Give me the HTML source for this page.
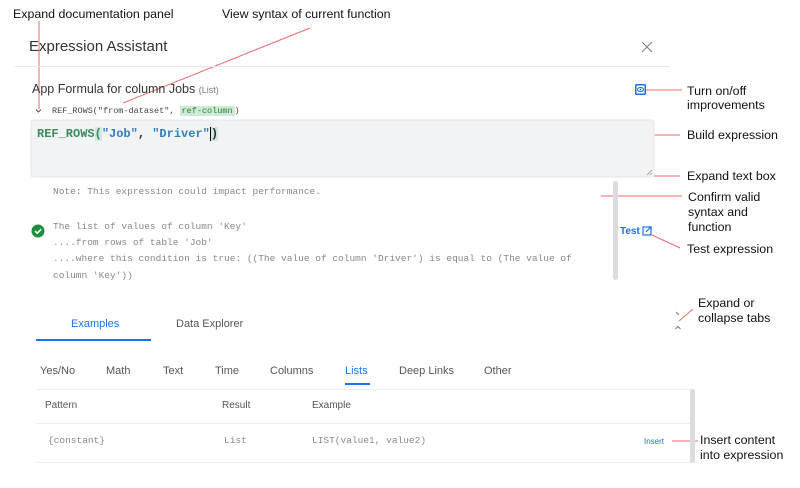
<!DOCTYPE html>
<html><head><meta charset="utf-8"><style>
body{margin:0;width:800px;height:488px;background:#fff;position:relative;overflow:hidden;font-family:"Liberation Sans",sans-serif;}
.a{position:absolute;white-space:nowrap;}
.lbl{font-size:12.4px;color:#111;line-height:14px;}
.mono{font-family:"Liberation Mono",monospace;}
.g{color:#888;font-size:9.5px;}
.tab{font-size:11px;color:#555;}
</style></head><body>
<svg class="a" style="left:0;top:0" width="800" height="488">
<g stroke="#f06a6a" stroke-width="1" fill="none">
<line x1="39" y1="21" x2="39" y2="109"/>
<line x1="310" y1="28" x2="123" y2="103"/>
<line x1="645" y1="90" x2="682" y2="90"/>
<line x1="648" y1="135" x2="680" y2="135"/>
<line x1="653" y1="176" x2="680" y2="176"/>
<line x1="601" y1="196" x2="682" y2="196"/>
<line x1="652" y1="235" x2="680" y2="248"/>
<line x1="693" y1="309" x2="679" y2="321"/>
<line x1="672" y1="441" x2="698" y2="441"/>
</g>
<line x1="15" y1="66.5" x2="670" y2="66.5" stroke="#e8e8e8"/>
<path d="M642 42l10 10M652 42l-10 10" stroke="#888" stroke-width="1.2"/>
<rect x="635" y="84" width="11" height="11" rx="1.5" fill="#1a73e8"/>
<rect x="636.5" y="85.5" width="8" height="8" fill="#fff"/>
<ellipse cx="640.5" cy="89.5" rx="3" ry="2" fill="none" stroke="#1a73e8"/>
<circle cx="640.5" cy="89.5" r="0.9" fill="#1a73e8"/>
<path d="M36 109.5l2.5 2.5 2.5-2.5" stroke="#555" fill="none"/>
<rect x="31" y="120" width="623" height="57" rx="2" fill="#f1f3f4" stroke="#e6e6e6"/>
<path d="M647 175l5-5M650 175l2-2" stroke="#999" stroke-width=".8"/>
<rect x="613" y="181" width="5" height="99" rx="2.5" fill="#dadce0"/>
<circle cx="38" cy="231" r="6.5" fill="#1e8e3e"/>
<path d="M35 231l2.2 2.2 4-4" stroke="#fff" stroke-width="1.6" fill="none"/>
<rect x="643" y="227" width="8" height="8" fill="none" stroke="#1a73e8" stroke-width="1.2"/>
<path d="M646 232l5-5M648 227h3v3" stroke="#1a73e8" stroke-width="1.2" fill="none"/>
<path d="M676 312l3 3" stroke="#777"/>
<path d="M675.5 329l2.5-2.5 2.5 2.5" stroke="#777" fill="none"/>
<rect x="36" y="339" width="115" height="2" fill="#1a73e8"/>
<rect x="345" y="383" width="25" height="2" fill="#1a73e8"/>
<line x1="36" y1="389.5" x2="690" y2="389.5" stroke="#eee"/>
<line x1="36" y1="423.5" x2="690" y2="423.5" stroke="#eee"/>
<line x1="36" y1="462.5" x2="690" y2="462.5" stroke="#eee"/>
<rect x="690" y="389" width="5" height="74" rx="2" fill="#dadce0"/>
</svg>
<div class="a lbl" style="left:13px;top:7px">Expand documentation panel</div>
<div class="a lbl" style="left:222px;top:7px">View syntax of current function</div>
<div class="a" style="left:29px;top:38px;font-size:15px;color:#333">Expression Assistant</div>
<div class="a" style="left:32px;top:82px;font-size:12.5px;color:#333">App Formula for column Jobs <span style="font-size:9px;color:#777">(List)</span></div>
<div class="a mono" style="left:52px;top:106px;font-size:8.5px;color:#444">REF_ROWS("from-dataset", <span style="background:#ceead6;color:#2e7d32;padding:0 2px">ref-column</span>)</div>
<div class="a mono" style="left:37px;top:127px;font-size:12px;font-weight:bold;color:#3a8c5c">REF_ROWS<span style="background:#cfe8e0">(</span><span style="color:#2f7fc1">"Job"</span><span style="color:#333">, </span><span style="color:#2f7fc1">"Driver"</span><span style="color:#333;background:#cfe8e0;border-left:1px solid #000">)</span></div>
<div class="a lbl" style="left:687px;top:84px">Turn on/off<br>improvements</div>
<div class="a lbl" style="left:687px;top:128px">Build expression</div>
<div class="a lbl" style="left:687px;top:169px">Expand text box</div>
<div class="a lbl" style="left:688px;top:190px;line-height:15px">Confirm valid<br>syntax and<br>function</div>
<div class="a lbl" style="left:687px;top:242px">Test expression</div>
<div class="a lbl" style="left:698px;top:296px;line-height:15px">Expand or<br>collapse tabs</div>
<div class="a lbl" style="left:700px;top:433px;line-height:15px">Insert content<br>into expression</div>
<div class="a mono g" style="left:53px;top:186px">Note: This expression could impact performance.</div>
<div class="a mono g" style="left:53px;top:219px;line-height:16.2px">The list of values of column 'Key'<br>....from rows of table 'Job'<br>....where this condition is true: ((The value of column 'Driver') is equal to (The value of<br>column 'Key'))</div>
<div class="a" style="left:620px;top:226px;font-size:10px;color:#1a73e8;font-weight:bold">Test</div>
<div class="a tab" style="left:71px;top:318px;color:#1a73e8">Examples</div>
<div class="a tab" style="left:176px;top:318px">Data Explorer</div>
<div class="a tab" style="left:40px;top:365px">Yes/No</div>
<div class="a tab" style="left:106px;top:365px">Math</div>
<div class="a tab" style="left:163px;top:365px">Text</div>
<div class="a tab" style="left:215px;top:365px">Time</div>
<div class="a tab" style="left:270px;top:365px">Columns</div>
<div class="a tab" style="left:345px;top:365px;color:#1a73e8">Lists</div>
<div class="a tab" style="left:399px;top:365px">Deep Links</div>
<div class="a tab" style="left:484px;top:365px">Other</div>
<div class="a tab" style="left:45px;top:400px;font-size:10px">Pattern</div>
<div class="a tab" style="left:222px;top:400px;font-size:10px">Result</div>
<div class="a tab" style="left:312px;top:400px;font-size:10px">Example</div>
<div class="a mono g" style="left:48px;top:435px">{constant}</div>
<div class="a mono g" style="left:224px;top:435px">List</div>
<div class="a mono g" style="left:312px;top:435px">LIST(value1, value2)</div>
<div class="a" style="left:644px;top:437px;font-size:8px;color:#1a73e8">Insert</div>
</body></html>
